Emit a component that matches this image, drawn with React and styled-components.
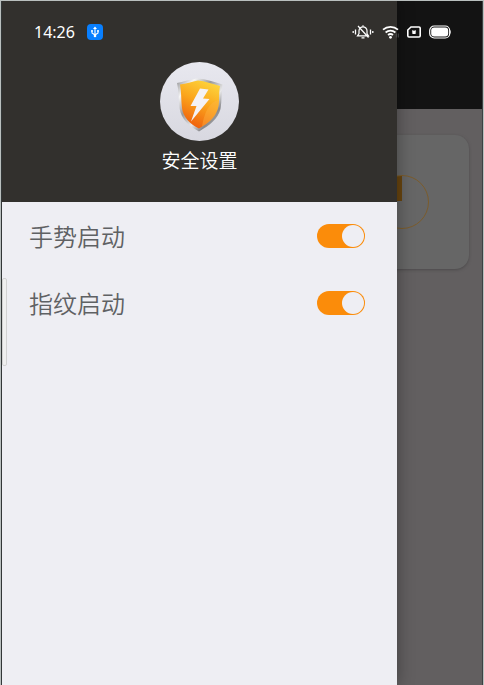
import React, { useState } from "react";
import styled, { createGlobalStyle } from "styled-components";

const GlobalStyle = createGlobalStyle`
  * {
    box-sizing: border-box;
  }
  body {
    margin: 0;
    font-family: "Noto Sans", "Noto Sans CJK SC", sans-serif;
  }
`;

const Screen = styled.div`
  position: relative;
  display: flex;
  min-height: 100vh;
  border: 1px solid #b9bfbe;
  border-bottom: 0;
  overflow: hidden;
`;
const Page = styled.main`
  flex: 1;
  background: #625f60;
  border-left: 1px solid #3c4142;
  border-right: 1px solid #3c4142;
`;
const PageHeader = styled.div`
  height: 108px;
  background: #131313;
`;
const Card = styled.section`
  display: flex;
  justify-content: flex-end;
  align-items: center;
  height: 134px;
  margin: 26px 13px;
  padding-right: 40px;
  border-radius: 14px;
  background: #666;
  box-shadow: 0 1px 3px #4c4a4b;
`;
const Gauge = styled.svg`
  display: block;
  width: 54px;
  height: 54px;
`;
const StatusBar = styled.header`
  position: absolute;
  inset: 0 0 auto;
  z-index: 2;
  display: flex;
  align-items: center;
  height: 61px;
  padding: 0 31px 0 33px;
  color: #fff;
`;
const Time = styled.time`
  margin-right: 12px;
  font-size: 16px;
  line-height: 24px;
`;
const StatusIcons = styled.div`
  display: flex;
  align-items: center;
  gap: 8px;
  margin-left: auto;
`;
const Icon = styled.svg`
  display: block;
  flex: none;
`;
const Drawer = styled.aside`
  position: absolute;
  inset: 0 auto 0 1px;
  z-index: 1;
  width: 82%;
  background: #eeeef3;
  box-shadow: 0 0 16px rgba(0, 0, 0, 0.35);
`;
const Profile = styled.div`
  display: flex;
  flex-direction: column;
  align-items: center;
  gap: 6px;
  height: 201px;
  padding-top: 61px;
  background: #32302d;
`;
const Title = styled.h1`
  margin: 0;
  color: #fff;
  font-size: 19px;
  font-weight: 350;
  line-height: 28px;
`;
const Settings = styled.div`
  display: flex;
  flex-direction: column;
`;
const Row = styled.label`
  display: flex;
  align-items: center;
  justify-content: space-between;
  height: 67px;
  padding: 0 32px 0 27px;
  color: #5f6163;
  font-size: 24px;
  font-weight: 350;
`;
const Switch = styled.input`
  appearance: none;
  display: flex;
  align-items: center;
  width: 48px;
  height: 24px;
  margin: 0;
  padding: 0 1px;
  border-radius: 12px;
  background: ${({ checked }) => (checked ? "#fb8c0a" : "#b5b5b8")};
  cursor: pointer;

  &::before {
    content: "";
    width: 22px;
    height: 22px;
    margin-left: ${({ checked }) => (checked ? "auto" : "0")};
    border-radius: 50%;
    background: #eeeef3;
  }
`;
const EdgeHandle = styled.div`
  position: absolute;
  top: 277px;
  left: 1px;
  z-index: 2;
  width: 5px;
  height: 88px;
  border: 1px solid #d2d2d2;
  border-radius: 2px;
  background: #efefef;
`;

const UsbIcon = () => (
  <Icon width="16" height="16" viewBox="0 0 16 16" fill="none">
    <rect width="16" height="16" rx="4" fill="#087fff" />
    <path d="M8 4v8M5 7v2l3 2 3-2V7" stroke="#fff" strokeWidth="1.1" />
    <path d="M8 2.5 10 5H6zM4.2 6h1.6v1.8H4.2zM10.2 6h1.6v1.8h-1.6z" fill="#fff" />
    <circle cx="8" cy="12" r="1.3" fill="#fff" />
  </Icon>
);

const MuteIcon = () => (
  <Icon width="22" height="16" viewBox="0 0 22 16" fill="none" stroke="#fff">
    <path
      d="M5.5 11.8h11L15 9.6V6.8a4 4 0 0 0-8 0v2.8zM9.5 13.8h3M11 1.2v1.6M6 2l10.5 11.5"
      strokeWidth="1.2"
    />
    <path d="M3.5 5.5v5M1.2 7v2M18.5 5.5v5M20.8 7v2" strokeWidth="1.3" />
  </Icon>
);

const WifiIcon = () => (
  <Icon width="17" height="14" viewBox="0 0 17 14" fill="none">
    <path
      d="M1 4.7a11.5 11.5 0 0 1 15 0M3.6 7.5a7.5 7.5 0 0 1 9.8 0M6 10a4 4 0 0 1 5 0"
      stroke="#fff"
      strokeWidth="1.7"
    />
    <circle cx="8.5" cy="12.3" r="1.4" fill="#fff" />
    <path d="M14.3 8.5v4M16.3 8.5v4" stroke="#555" strokeWidth=".8" />
  </Icon>
);

const SimIcon = () => (
  <Icon width="14" height="12" viewBox="0 0 14 12" fill="none" stroke="#fff">
    <path
      d="M4 1h8a1.2 1.2 0 0 1 1.2 1.2v7.6A1.2 1.2 0 0 1 12 11H2A1.2 1.2 0 0 1 .8 9.8V4z"
      strokeWidth="1.6"
    />
    <path d="m5.3 4.6 3.4 2.8m0-2.8L5.300 7.400" strokeWidth="1.500" />
  </Icon>
);

const BatteryIcon = () => (
  <Icon width="23" height="14" viewBox="0 0 23 14" fill="none">
    <rect x=".7" y="1" width="20" height="12" rx="4.5" stroke="#fff" strokeWidth="1.2" />
    <rect x="2.2" y="2.5" width="17" height="9" rx="3" fill="#fff" />
    <path d="M21.300 4.500q1.500 2.500 0 5z" fill="#fff" />
  </Icon>
);

const ShieldLogo = () => (
  <Icon width="79" height="79" viewBox="0 0 79 79">
    <defs>
      <linearGradient id="disc" x1="0" y1="0" x2="0" y2="1">
        <stop offset="0" stopColor="#e8e8ef" />
        <stop offset="1" stopColor="#d8d8e0" />
      </linearGradient>
      <linearGradient id="gold" x1=".7" y1="0" x2=".3" y2="1">
        <stop offset="0" stopColor="#fdd43c" />
        <stop offset=".45" stopColor="#fba61c" />
        <stop offset="1" stopColor="#ee5a0c" />
      </linearGradient>
      <linearGradient id="rim" x1="0" y1="0" x2="1" y2="1">
        <stop offset="0" stopColor="#8b8b8d" />
        <stop offset=".2" stopColor="#f6f6f6" />
        <stop offset=".4" stopColor="#99999b" />
        <stop offset=".6" stopColor="#e8e8e8" />
        <stop offset=".75" stopColor="#88888b" />
        <stop offset="1" stopColor="#dcdcdf" />
      </linearGradient>
    </defs>
    <circle cx="39.5" cy="39.500" r="39.500" fill="url(#disc)" />
    <path
      d="M17 21C23 20 31 17 38 16.500 46 17 54 20 62.500 22.500 61 30 62 38 60.500 47 58 57 50 63 39 69.500 29 64 21 57 19.500 46 18.500 37 19 29 17 21z"
      fill="url(#rim)"
    />
    <path
      d="M20 22.500C26 22 32 19.500 38 18.500 45 19 52 22 60 24 58.500 31 60 38 58 46 55 56 48 61 39 66.500 30 62 23 55 22 46 21 38 21.500 30 20 22.500z"
      fill="url(#gold)"
    />
    <path d="M59 38C52 39 45 46 42 64.500 51 60 57 54 58.500 44z" fill="#ffb545" opacity=".4" />
    <path d="m40 26.500 8.500 1L43 36.500l6.500.5L31 59.500 36.500 44H30.500z" fill="#f4f2f5" />
  </Icon>
);

const settings = [
  { id: "gesture", label: "手势启动" },
  { id: "fingerprint", label: "指纹启动" },
];

const App = () => {
  const [enabled, setEnabled] = useState({ gesture: true, fingerprint: true });

  const toggle = (id) => setEnabled({ ...enabled, [id]: !enabled[id] });

  return (
    <>
      <GlobalStyle />
      <Screen>
        <StatusBar>
          <Time>14:26</Time>
          <UsbIcon />
          <StatusIcons>
            <MuteIcon />
            <WifiIcon />
            <SimIcon />
            <BatteryIcon />
          </StatusIcons>
        </StatusBar>
        <Drawer>
          <Profile>
            <ShieldLogo />
            <Title>安全设置</Title>
          </Profile>
          <Settings>
            {settings.map(({ id, label }) => (
              <Row key={id} htmlFor={id}>
                {label}
                <Switch
                  id={id}
                  type="checkbox"
                  role="switch"
                  checked={enabled[id]}
                  onChange={() => toggle(id)}
                />
              </Row>
            ))}
          </Settings>
        </Drawer>
        <EdgeHandle />
        <Page>
          <PageHeader />
          <Card>
            <Gauge viewBox="0 0 54 54" fill="none">
              <path d="M0 1h27v25H0z" fill="#68450f" />
              <circle cx="27" cy="27" r="26.5" stroke="#7b5c2c" />
            </Gauge>
          </Card>
        </Page>
      </Screen>
    </>
  );
};

export default App;
